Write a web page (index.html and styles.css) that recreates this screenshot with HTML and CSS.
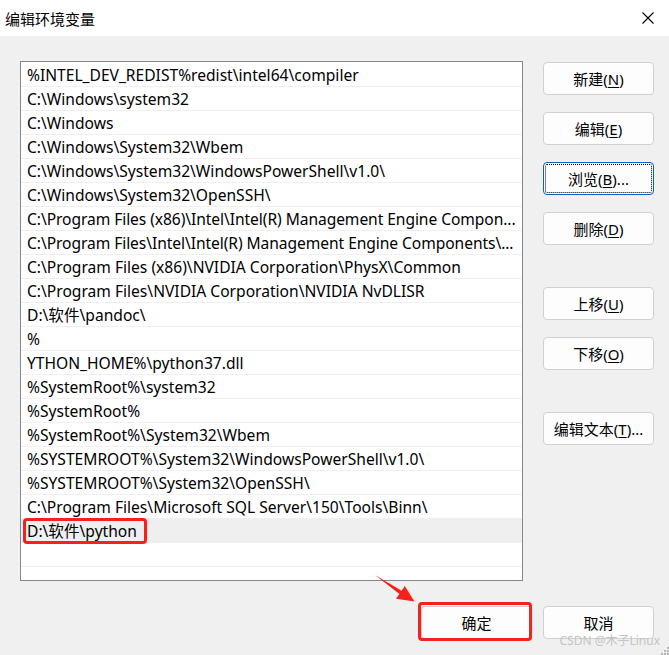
FILE: index.html
```html
<!DOCTYPE html>
<html lang="zh-CN">
<head>
<meta charset="utf-8">
<title>编辑环境变量</title>
<link rel="stylesheet" href="styles.css">
</head>
<body>
<div class="window">
  <div class="titlebar">
    <span class="title">编辑环境变量</span>
    <svg class="close" width="12" height="12" viewBox="0 0 12 12"><path d="M0.5 0.5 L11.5 11.5 M11.5 0.5 L0.5 11.5" stroke="#000" stroke-width="1.1" fill="none"/></svg>
  </div>
  <div class="content">
    <div class="listbox">
      <div class="row">%INTEL_DEV_REDIST%redist\intel64\compiler</div>
      <div class="row">C:\Windows\system32</div>
      <div class="row">C:\Windows</div>
      <div class="row">C:\Windows\System32\Wbem</div>
      <div class="row">C:\Windows\System32\WindowsPowerShell\v1.0\</div>
      <div class="row">C:\Windows\System32\OpenSSH\</div>
      <div class="row tight">C:\Program Files (x86)\Intel\Intel(R) Management Engine Compon...</div>
      <div class="row tight">C:\Program Files\Intel\Intel(R) Management Engine Components\...</div>
      <div class="row">C:\Program Files (x86)\NVIDIA Corporation\PhysX\Common</div>
      <div class="row">C:\Program Files\NVIDIA Corporation\NVIDIA NvDLISR</div>
      <div class="row">D:\软件\pandoc\</div>
      <div class="row">%</div>
      <div class="row">YTHON_HOME%\python37.dll</div>
      <div class="row">%SystemRoot%\system32</div>
      <div class="row">%SystemRoot%</div>
      <div class="row">%SystemRoot%\System32\Wbem</div>
      <div class="row">%SYSTEMROOT%\System32\WindowsPowerShell\v1.0\</div>
      <div class="row">%SYSTEMROOT%\System32\OpenSSH\</div>
      <div class="row">C:\Program Files\Microsoft SQL Server\150\Tools\Binn\</div>
      <div class="row selected">D:\软件\python<span class="mark-row"></span></div>
      <div class="row"></div>
    </div>
    <div class="buttons">
      <button class="btn">新建(<u>N</u>)</button>
      <button class="btn">编辑(<u>E</u>)</button>
      <button class="btn focused">浏览(<u>B</u>)...</button>
      <button class="btn">删除(<u>D</u>)</button>
      <button class="btn spaced">上移(<u>U</u>)</button>
      <button class="btn">下移(<u>O</u>)</button>
      <button class="btn spaced">编辑文本(<u>T</u>)...</button>
    </div>
  </div>
  <div class="footer">
    <button class="btn ok">确定<span class="mark-btn"></span></button>
    <button class="btn">取消</button>
  </div>
  <svg class="arrow" width="60" height="40" viewBox="370 570 60 40"><polygon points="375,575 401.6,590.7 404.8,586 414.5,601.5 396,598.8 399.4,594.1" fill="#f5221b"/></svg>
  <span class="watermark">CSDN @木子Linux</span>
  <svg class="grip" width="9" height="9" viewBox="0 0 9 9"><g fill="#b5b5b5"><rect x="7" y="1" width="2" height="2"/><rect x="4" y="4" width="2" height="2"/><rect x="7" y="4" width="2" height="2"/><rect x="1" y="7" width="2" height="2"/><rect x="4" y="7" width="2" height="2"/><rect x="7" y="7" width="2" height="2"/></g></svg>
</div>
</body>
</html>
```
FILE: styles.css
```css
* { box-sizing: border-box; }
html, body { margin: 0; padding: 0; }
body {
  background: #f0f0f0;
  font-family: "Noto Sans", "Noto Sans CJK SC", sans-serif;
  font-size: 15px;
  color: #000;
}
.window {
  position: relative;
  width: 669px;
  height: 655px;
  display: flex;
  flex-direction: column;
  overflow: hidden;
}
.titlebar {
  height: 36px;
  background: #fff;
  display: flex;
  align-items: center;
  justify-content: space-between;
  padding: 0 15px 0 5px;
}
.title { font-size: 15px; }
.close { display: block; }
.content {
  display: flex;
  gap: 20px;
  padding: 25px 15px 0 20px;
}
.listbox {
  width: 503px;
  height: 520px;
  border: 1px solid #828790;
  background: #fff;
  padding-top: 1px;
  overflow: hidden;
}
.row {
  position: relative;
  height: 24px;
  line-height: 24px;
  padding-left: 6px;
  font-size: 15.6px;
  border-bottom: 1px solid #f0f0f0;
  white-space: nowrap;
  overflow: visible;
}
.row.tight { letter-spacing: -0.07px; }
.row.selected { background: #efefef; border-bottom-color: #efefef; }
.mark-row {
  position: absolute;
  left: 2px;
  top: -1px;
  width: 124px;
  height: 26px;
  border: 3px solid #f5221b;
  border-radius: 4px;
}
.buttons {
  width: 111px;
  display: flex;
  flex-direction: column;
  gap: 17px;
  padding-top: 1px;
}
.btn {
  width: 111px;
  height: 33px;
  border: 1px solid #d0d0d0;
  border-radius: 4px;
  background: #fdfdfd;
  font-family: "Noto Sans", "Noto Sans CJK SC", sans-serif;
  font-size: 15px;
  color: #000;
  padding: 0;
  position: relative;
}
.btn u { text-underline-offset: 2px; }
.btn.spaced { margin-top: 25px; }
.btn.focused {
  border-color: #0067c0;
  outline: 1px dotted #000;
  outline-offset: -3px;
}
.footer {
  display: flex;
  justify-content: flex-end;
  gap: 11px;
  padding: 0 15px 0 0;
  margin-top: 25px;
}
.btn.ok { background: #fdfdfd; }
.mark-btn {
  position: absolute;
  left: -4px;
  top: -5px;
  right: -1px;
  bottom: -3px;
  border: 3px solid #f5221b;
  border-radius: 4px;
}
.arrow {
  position: absolute;
  left: 370px;
  top: 570px;
}
.watermark {
  position: absolute;
  right: 9px;
  bottom: 6px;
  font-size: 12px;
  color: #c4c4c4;
  font-family: "Noto Sans", "Noto Sans CJK SC", sans-serif;
}
.grip {
  position: absolute;
  right: 0;
  bottom: 0;
}
```
